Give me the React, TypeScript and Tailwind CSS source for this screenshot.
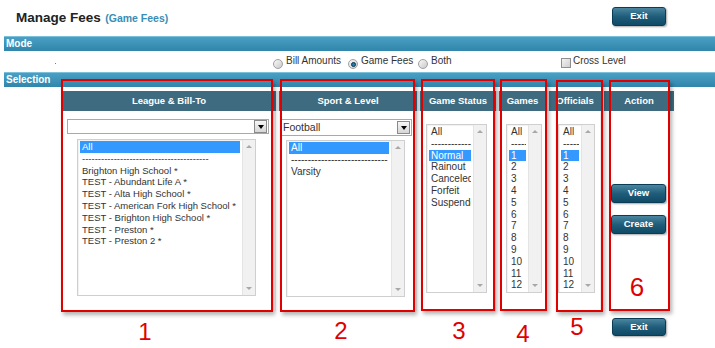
import React from "react";

function Btn({ label, className = "" }: { label: string; className?: string }) {
  return (
    <div
      className={`flex items-center justify-center rounded-[3px] border border-[#0b3c55] bg-linear-to-b from-[#4a86a0] via-[#1f5d7a] to-[#0f4a66] text-[9.5px] font-bold text-white shadow-[1px_1px_2px_rgba(0,0,0,0.35)] ${className}`}
    >
      {label}
    </div>
  );
}

function Radio({ checked = false }: { checked?: boolean }) {
  return (
    <span className="mt-[4px] flex h-[10px] w-[10px] shrink-0 items-center justify-center rounded-full border border-[#a0a0a0] bg-linear-to-br from-[#fafafa] to-[#c9c9c9]">
      {checked && <span className="h-[5px] w-[5px] rounded-full border border-[#0d3550] bg-[#2a79a8]" />}
    </span>
  );
}

function SelectBox({ value, className = "" }: { value: string; className?: string }) {
  return (
    <div className={`flex items-center border border-[#a9a9a9] bg-white ${className}`}>
      <span className="flex-1 pl-[2px] text-[10.5px] leading-none text-[#333]">{value}</span>
      <span className="mr-[1px] flex h-[13px] w-[13px] items-center justify-center border border-[#8a8a8a] bg-linear-to-b from-[#f6f6f6] to-[#d6d6d6]">
        <span className="h-0 w-0 border-x-[3.5px] border-t-[4px] border-x-transparent border-t-black" />
      </span>
    </div>
  );
}

function ListBox({
  items,
  selected,
  className = "",
  textSize = "text-[10px]",
}: {
  items: string[];
  selected: number;
  className?: string;
  textSize?: string;
}) {
  return (
    <div className={`flex border border-[#cfcfcf] bg-white shadow-[inset_1px_1px_1px_rgba(0,0,0,0.06)] ${className}`}>
      <div className={`min-w-0 flex-1 overflow-hidden px-[2px] pt-[1px] ${textSize} leading-[11.8px] text-[#333]`}>
        {items.map((it, i) => (
          <div
            key={i}
            className={`overflow-hidden whitespace-nowrap pl-[2px] ${i === selected ? "bg-[#3399ff] text-white" : ""}`}
          >
            {it}
          </div>
        ))}
      </div>
      <div className="flex w-[13px] shrink-0 flex-col items-center justify-between border-l border-[#e4e4e4] bg-[#f1f1f1] py-[5px]">
        <span className="h-0 w-0 border-x-[3px] border-b-[3px] border-x-transparent border-b-[#a8a8a8]" />
        <span className="h-0 w-0 border-x-[3px] border-t-[3px] border-x-transparent border-t-[#a8a8a8]" />
      </div>
    </div>
  );
}

const dashes = (n: number) => "-".repeat(n);

const leagues = [
  "All",
  dashes(40),
  "Brighton High School *",
  "TEST - Abundant Life A *",
  "TEST - Alta High School *",
  "TEST - American Fork High School *",
  "TEST - Brighton High School *",
  "TEST - Preston *",
  "TEST - Preston 2 *",
];

const nums = ["All", dashes(20), "1", "2", "3", "4", "5", "6", "7", "8", "9", "10", "11", "12"];

const boxes = [
  { l: "left-[61px]", t: "top-[79px]", w: "w-[212px]", h: "h-[233px]" },
  { l: "left-[280px]", t: "top-[79px]", w: "w-[135px]", h: "h-[233px]" },
  { l: "left-[421px]", t: "top-[79px]", w: "w-[74px]", h: "h-[232px]" },
  { l: "left-[500px]", t: "top-[79px]", w: "w-[47px]", h: "h-[232px]" },
  { l: "left-[556px]", t: "top-[80px]", w: "w-[47px]", h: "h-[232px]" },
  { l: "left-[609px]", t: "top-[80px]", w: "w-[61px]", h: "h-[231px]" },
];

export default function App() {
  return (
    <div className="relative h-[348px] w-[715px] overflow-hidden bg-white font-['Liberation_Sans',Arial,sans-serif]">
      {/* Title row */}
      <div className="flex h-[36px] items-start">
        <div className="pl-[16px] pt-[9px] leading-[16px]">
          <span className="text-[13.5px] font-bold text-[#222]">Manage Fees</span>{" "}
          <span className="text-[10.5px] font-bold text-[#3a8db4]">(Game Fees)</span>
        </div>
        <Btn label="Exit" className="ml-auto mr-[49px] mt-[7px] h-[19px] w-[54px]" />
      </div>

      {/* Mode bar */}
      <div className="ml-[4px] h-[15px] border-t border-[#7cc0dc] bg-linear-to-b from-[#4aa0c4] to-[#2f85ab] pl-[2px] text-[10px] font-bold leading-[13px] text-white">
        Mode
      </div>

      {/* Radio row */}
      <div className="flex h-[21px] items-start pt-[4px] text-[10px] leading-[12px] text-[#333]">
        <span className="ml-[55px] mt-[8px] h-[1px] w-[1px] bg-[#e05050]" />
        <div className="ml-[217px] flex w-[75px] gap-[3px]">
          <Radio />
          <span>Bill Amounts</span>
        </div>
        <div className="flex w-[70px] gap-[3px]">
          <Radio checked />
          <span>Game Fees</span>
        </div>
        <div className="flex w-[143px] gap-[3px]">
          <Radio />
          <span>Both</span>
        </div>
        <div className="flex gap-[2px]">
          <span className="mt-[3px] h-[10px] w-[10px] border border-[#8f8f8f] bg-linear-to-br from-[#f4f4f4] to-[#cfcfcf]" />
          <span>Cross Level</span>
        </div>
      </div>

      {/* Selection bar */}
      <div className="ml-[4px] h-[15px] border-t border-[#7cc0dc] bg-linear-to-b from-[#4aa0c4] to-[#2f85ab] pl-[2px] text-[10px] font-bold leading-[13px] text-white">
        Selection
      </div>

      {/* Table */}
      <div className="ml-[62px] mt-[4px] w-[612px]">
        <div className="flex h-[20px] gap-[3px] bg-[#d3dde2] text-center text-[9.5px] font-bold leading-[20px] text-white">
          <div className="w-[214px] bg-[#3e6b80]">League &amp; Bill-To</div>
          <div className="w-[138px] bg-[#3e6b80]">Sport &amp; Level</div>
          <div className="w-[76px] bg-[#3e6b80]">Game Status</div>
          <div className="w-[47px] bg-[#3e6b80]">Games</div>
          <div className="w-[52px] bg-[#3e6b80]">Officials</div>
          <div className="w-[70px] bg-[#3e6b80]">Action</div>
        </div>
        <div className="flex h-[200px] gap-[3px]">
          <div className="w-[214px] border-r border-[#ececec]">
            <SelectBox value="" className="ml-[5px] mt-[8px] h-[15px] w-[202px]" />
            <ListBox
              items={leagues}
              selected={0}
              textSize="text-[9.5px]"
              className="ml-[15px] mt-[5px] h-[157px] w-[179px]"
            />
          </div>
          <div className="w-[138px] border-r border-[#ececec]">
            <SelectBox value="Football" className="ml-[1px] mt-[8px] h-[17px] w-[132px]" />
            <ListBox
              items={["All", dashes(29), "Varsity"]}
              selected={0}
              className="ml-[7px] mt-[4px] h-[157px] w-[119px]"
            />
          </div>
          <div className="w-[76px] border-r border-[#ececec]">
            <ListBox
              items={["All", dashes(20), "Normal", "Rainout", "Canceled", "Forfeit", "Suspended"]}
              selected={2}
              className="ml-[6px] mt-[13px] h-[169px] w-[61px]"
            />
          </div>
          <div className="w-[47px] border-r border-[#ececec]">
            <ListBox items={nums} selected={2} className="ml-[7px] mt-[13px] h-[169px] w-[36px]" />
          </div>
          <div className="w-[52px] border-r border-[#ececec]">
            <ListBox items={nums} selected={2} className="ml-[9px] mt-[13px] h-[169px] w-[37px]" />
          </div>
          <div className="w-[70px]">
            <Btn label="View" className="ml-[7px] mt-[73px] h-[19px] w-[55px]" />
            <Btn label="Create" className="ml-[7px] mt-[12px] h-[19px] w-[55px]" />
          </div>
        </div>
      </div>

      <Btn label="Exit" className="ml-[612px] mt-[7px] h-[18px] w-[54px]" />

      {/* Annotation boxes */}
      {boxes.map((b, i) => (
        <div
          key={i}
          className={`pointer-events-none absolute border-2 border-[#e00000] shadow-[2px_3px_4px_rgba(0,0,0,0.3)] ${b.l} ${b.t} ${b.w} ${b.h}`}
        />
      ))}

      {/* Annotation numbers */}
      <span className="absolute left-[135px] top-[320px] w-[20px] text-center text-[24px] leading-[24px] text-[#e00000]">1</span>
      <span className="absolute left-[331px] top-[319px] w-[20px] text-center text-[24px] leading-[24px] text-[#e00000]">2</span>
      <span className="absolute left-[449px] top-[319px] w-[20px] text-center text-[24px] leading-[24px] text-[#e00000]">3</span>
      <span className="absolute left-[513px] top-[322px] w-[20px] text-center text-[24px] leading-[24px] text-[#e00000]">4</span>
      <span className="absolute left-[567px] top-[315px] w-[20px] text-center text-[24px] leading-[24px] text-[#e00000]">5</span>
      <span className="absolute left-[627px] top-[274px] w-[20px] text-center text-[26px] leading-[26px] text-[#e00000]">6</span>
    </div>
  );
}
